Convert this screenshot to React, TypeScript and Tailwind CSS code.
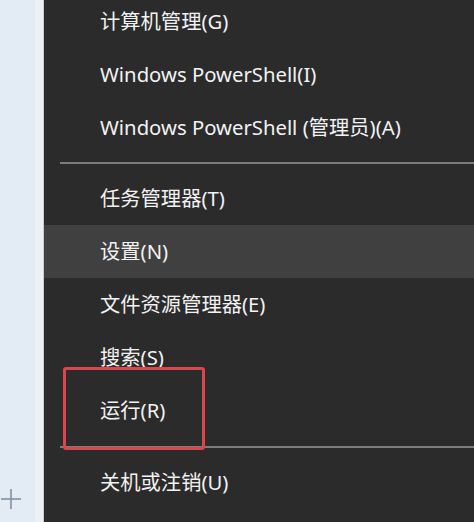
import React from 'react';

type Item = { label: string; active?: boolean };

const groups: Item[][] = [
  [
    { label: '计算机管理(G)' },
    { label: 'Windows PowerShell(I)' },
    { label: 'Windows PowerShell (管理员)(A)' },
  ],
  [
    { label: '任务管理器(T)' },
    { label: '设置(N)', active: true },
    { label: '文件资源管理器(E)' },
    { label: '搜索(S)' },
    { label: '运行(R)' },
  ],
  [{ label: '关机或注销(U)' }],
];

const MenuRow: React.FC<{ item: Item }> = ({ item }) => (
  <div className={`h-[53px] flex items-center pl-[56px] ${item.active ? 'bg-[#404040]' : ''}`}>
    <span className="text-[20.3px] text-[#f2f2f2] leading-none">{item.label}</span>
  </div>
);

export default function App() {
  return (
    <div
      className="relative w-[474px] h-[522px] overflow-hidden flex"
      style={{ fontFamily: '"Noto Sans", "Noto Sans CJK SC", sans-serif' }}
    >
      {/* desktop behind the menu */}
      <div className="w-[44px] h-full flex">
        <div className="w-[35px] h-full bg-[#e3ebf5] flex flex-col justify-end items-center pb-[12px]">
          <svg width="22" height="22" viewBox="0 0 22 22" className="-ml-[14px]">
            <path d="M11 1v20M1 11h20" stroke="#7d8ca3" strokeWidth="1.5" />
          </svg>
        </div>
        <div className="w-[8px] h-full bg-[#edf0f4]" />
        <div className="w-px h-full bg-[#c9ccd0]" />
      </div>

      {/* context menu */}
      <div className="flex-1 h-full bg-[#2b2b2b]">
        <div className="-mt-[5px]">
          {groups.map((group, gi) => (
            <div key={gi}>
              {gi > 0 && (
                <div className={`flex items-center pl-[16px] ${gi === 1 ? 'h-[18px]' : 'h-[19px]'}`}>
                  <div className="h-[2px] w-full bg-[#7c7c7c]" />
                </div>
              )}
              {group.map(item => (
                <MenuRow key={item.label} item={item} />
              ))}
            </div>
          ))}
        </div>
      </div>

      {/* red highlight around 运行 */}
      <div className="absolute left-[63px] top-[367px] w-[142px] h-[83px] border-[3px] border-[#d9464d] rounded-[3px]" />
    </div>
  );
}
